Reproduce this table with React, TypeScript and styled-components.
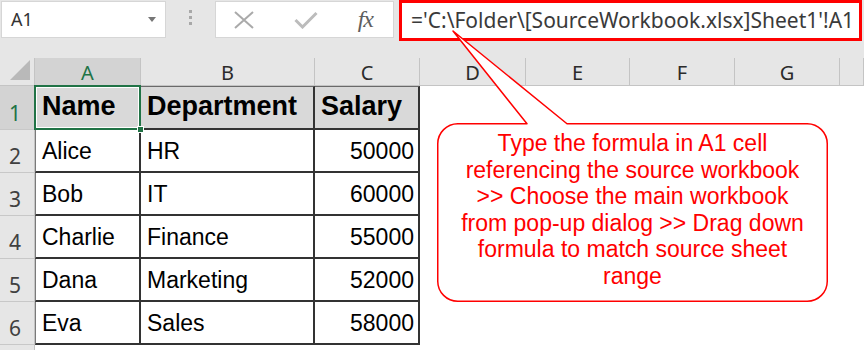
import React from "react";
import styled, { createGlobalStyle } from "styled-components";

const UI_FONT = `"Noto Sans", "Open Sans", sans-serif`;
const CELL_FONT = `"Liberation Sans", Arial, sans-serif`;

const GlobalStyle = createGlobalStyle`
  html, body { margin: 0; padding: 0; background: #ffffff; }
  body { font-family: ${CELL_FONT}; }
  * { box-sizing: border-box; }
`;

const Page = styled.div`
  position: relative;
  width: 864px;
  height: 350px;
  overflow: hidden;
  background: #ffffff;
`;

const Toolbar = styled.div`
  height: 58px;
  background: #e6e6e6;
  display: flex;
  align-items: flex-start;
  padding-left: 1px;
`;

const NameBox = styled.div`
  margin-top: 1px;
  width: 165px;
  height: 37px;
  background: #ffffff;
  border: 1px solid #d6d6d6;
  display: flex;
  align-items: center;
  justify-content: space-between;
  padding: 0 9px 1px 9px;
  font-family: ${UI_FONT};
  font-size: 18px;
  color: #333333;
`;

const Caret = styled.span`
  width: 0;
  height: 0;
  border-left: 4px solid transparent;
  border-right: 4px solid transparent;
  border-top: 5px solid #767676;
`;

const Grip = styled.div`
  width: 49px;
  padding-top: 10px;
  display: flex;
  flex-direction: column;
  align-items: center;
  gap: 3px;
`;

const GripDot = styled.span`
  width: 3px;
  height: 3px;
  background: #a8a8a8;
`;

const FxButtons = styled.div`
  margin-top: 1px;
  width: 179px;
  height: 37px;
  background: #ffffff;
  border: 1px solid #d6d6d6;
  display: flex;
  align-items: center;
  justify-content: space-between;
  padding: 0 20px 0 17px;
`;

const FxLabel = styled.span`
  font-family: "Liberation Serif", "Times New Roman", serif;
  font-style: italic;
  font-size: 24px;
  color: #5e5e5e;
  letter-spacing: -1px;
  line-height: 1;
  margin-top: -2px;
`;

const FormulaBar = styled.div`
  margin-left: 5px;
  width: 463px;
  height: 41px;
  background: #ffffff;
  border: 3px solid #ff0000;
  display: flex;
  align-items: center;
  padding: 0 0 2px 9px;
  font-family: ${UI_FONT};
  font-size: 21px;
  color: #3a3a3a;
  white-space: nowrap;
  overflow: hidden;
`;

const Sheet = styled.div`
  display: grid;
  grid-template-columns: 35px 106px 174px 105px 106px 104px 105px 105px 1fr;
  grid-template-rows: 28px 44px repeat(5, 43px) 1fr;
  height: 292px;
`;

const Corner = styled.div`
  position: relative;
  background: #e6e6e6;
  border-right: 1px solid #c4c4c4;
  border-bottom: 1px solid #c4c4c4;
  &::after {
    content: "";
    position: absolute;
    right: 4px;
    bottom: 5px;
    width: 0;
    height: 0;
    border-left: 20px solid transparent;
    border-bottom: 20px solid #b9b9b9;
  }
`;

const ColHeader = styled.div<{ $selected?: boolean }>`
  background: ${(p) => (p.$selected ? "#d3d3d3" : "#e6e6e6")};
  border-right: 1px solid #c4c4c4;
  border-bottom: 1px solid ${(p) => (p.$selected ? "#217346" : "#c4c4c4")};
  display: flex;
  align-items: center;
  justify-content: center;
  padding-top: 3px;
  font-family: ${UI_FONT};
  font-size: 20px;
  line-height: 1;
  color: ${(p) => (p.$selected ? "#217346" : "#2b2b2b")};
`;

const RowHeader = styled.div<{ $selected?: boolean }>`
  background: ${(p) => (p.$selected ? "#d3d3d3" : "#e6e6e6")};
  border-right: 1px solid #c4c4c4;
  border-bottom: 1px solid #c8c8c8;
  display: flex;
  align-items: flex-end;
  padding: 0 0 5px 9px;
  font-family: ${UI_FONT};
  font-size: 21px;
  line-height: 1;
  color: ${(p) => (p.$selected ? "#217346" : "#404040")};
`;

const Cell = styled.div<{ $head?: boolean; $right?: boolean; $first?: boolean }>`
  position: relative;
  background: ${(p) => (p.$head ? "#d9d9d9" : "#ffffff")};
  border-right: 2px solid #333333;
  border-bottom: 2px solid #333333;
  border-top: ${(p) => (p.$head ? "1px solid #6a6a6a" : "none")};
  border-left: ${(p) => (p.$first ? "1px solid #7a7a7a" : "none")};
  display: flex;
  align-items: flex-end;
  justify-content: ${(p) => (p.$right ? "flex-end" : "flex-start")};
  padding: ${(p) => (p.$head ? "0 6px 6px 6px" : "0 4px 6px 6px")};
  font-family: ${CELL_FONT};
  font-size: ${(p) => (p.$head ? "27px" : "23px")};
  font-weight: ${(p) => (p.$head ? 700 : 400)};
  color: #000000;
  white-space: nowrap;
`;

const Blank = styled.div`
  background: #ffffff;
`;

const Selection = styled.div`
  position: absolute;
  top: -2px;
  left: -2px;
  right: -2px;
  bottom: -2px;
  border: 2px solid #217346;
  box-shadow: inset 0 0 0 1px #ffffff;
  pointer-events: none;
  z-index: 2;
`;

const FillHandle = styled.span`
  position: absolute;
  right: -5px;
  bottom: -5px;
  width: 7px;
  height: 7px;
  background: #217346;
  border: 1px solid #ffffff;
`;

const Callout = styled.div`
  position: absolute;
  left: 437px;
  top: 123px;
  width: 391px;
  height: 179px;
  z-index: 5;
`;

const CalloutShape = styled.svg`
  position: absolute;
  left: 0;
  top: 0;
  overflow: visible;
`;

const CalloutText = styled.div`
  position: relative;
  padding-top: 7px;
  text-align: center;
  font-family: ${CELL_FONT};
  font-size: 23px;
  line-height: 26.6px;
  color: #ff0000;
`;

const columns = ["A", "B", "C", "D", "E", "F", "G", ""];

const rows: [string, string, string][] = [
  ["Alice", "HR", "50000"],
  ["Bob", "IT", "60000"],
  ["Charlie", "Finance", "55000"],
  ["Dana", "Marketing", "52000"],
  ["Eva", "Sales", "58000"],
];

const CancelIcon = () => (
  <svg width="22" height="18" viewBox="0 0 22 18">
    <path d="M2 1 L20 17 M20 1 L2 17" stroke="#aaaaaa" strokeWidth="2" fill="none" />
  </svg>
);

const EnterIcon = () => (
  <svg width="24" height="18" viewBox="0 0 24 18">
    <path d="M1.5 9 L8.5 16 L22.5 2" stroke="#bcbcbc" strokeWidth="3" fill="none" />
  </svg>
);

function BlankRest() {
  return (
    <>
      {[0, 1, 2, 3, 4].map((i) => (
        <Blank key={i} />
      ))}
    </>
  );
}

export default function App() {
  return (
    <Page>
      <GlobalStyle />
      <Toolbar>
        <NameBox>
          <span>A1</span>
          <Caret />
        </NameBox>
        <Grip>
          <GripDot />
          <GripDot />
          <GripDot />
        </Grip>
        <FxButtons>
          <CancelIcon />
          <EnterIcon />
          <FxLabel>fx</FxLabel>
        </FxButtons>
        <FormulaBar>='C:\Folder\[SourceWorkbook.xlsx]Sheet1'!A1</FormulaBar>
      </Toolbar>
      <Sheet>
        <Corner />
        {columns.map((c, i) => (
          <ColHeader key={i} $selected={c === "A"}>
            {c}
          </ColHeader>
        ))}

        <RowHeader $selected>1</RowHeader>
        <Cell $head $first>
          Name
          <Selection>
            <FillHandle />
          </Selection>
        </Cell>
        <Cell $head>Department</Cell>
        <Cell $head>Salary</Cell>
        <BlankRest />

        {rows.map((r, i) => (
          <React.Fragment key={i}>
            <RowHeader>{i + 2}</RowHeader>
            <Cell $first>{r[0]}</Cell>
            <Cell>{r[1]}</Cell>
            <Cell $right>{r[2]}</Cell>
            <BlankRest />
          </React.Fragment>
        ))}

        <RowHeader />
        <Blank />
        <Blank />
        <Blank />
        <BlankRest />
      </Sheet>

      <Callout>
        <CalloutShape width="391" height="179" viewBox="0 0 391 179">
          <path
            d="M20.75 0.75 H90 L16 -92 L130 0.75 H370.25 A20 20 0 0 1 390.25 20.75 V158.25 A20 20 0 0 1 370.25 178.25 H20.75 A20 20 0 0 1 0.75 158.25 V20.75 A20 20 0 0 1 20.75 0.75 Z"
            fill="#ffffff"
            stroke="#ff0000"
            strokeWidth="1.5"
            strokeLinejoin="round"
          />
        </CalloutShape>
        <CalloutText>
          Type the formula in A1 cell
          <br />
          referencing the source workbook
          <br />
          &gt;&gt; Choose the main workbook
          <br />
          from pop-up dialog &gt;&gt; Drag down
          <br />
          formula to match source sheet
          <br />
          range
        </CalloutText>
      </Callout>
    </Page>
  );
}
